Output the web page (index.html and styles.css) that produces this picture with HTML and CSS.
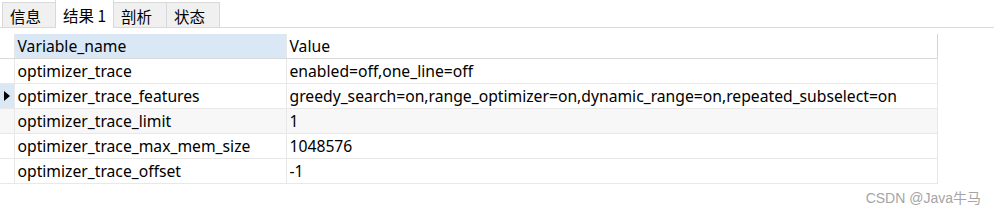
FILE: index.html
```html
<!DOCTYPE html>
<html lang="zh-CN">
<head>
  <meta charset="UTF-8" />
  <title>结果 1</title>
  <link rel="stylesheet" href="styles.css">
</head>
<body>
  <!-- 结果页签 -->
  <div class="tabbar">
    <div class="tab">信息</div>
    <div class="tab active">结果 1</div>
    <div class="tab">剖析</div>
    <div class="tab">状态</div>
  </div>

  <!-- 结果网格 -->
  <table class="grid">
    <colgroup>
      <col class="col-mark">
      <col class="col-name">
      <col class="col-value">
    </colgroup>
    <thead>
      <tr>
        <th class="mark"></th>
        <th class="sorted">Variable_name</th>
        <th>Value</th>
      </tr>
    </thead>
    <tbody>
      <tr>
        <td class="mark"></td>
        <td>optimizer_trace</td>
        <td>enabled=off,one_line=off</td>
      </tr>
      <tr class="current">
        <td class="mark"><span class="arrow"></span></td>
        <td>optimizer_trace_features</td>
        <td>greedy_search=on,range_optimizer=on,dynamic_range=on,repeated_subselect=on</td>
      </tr>
      <tr class="alt">
        <td class="mark"></td>
        <td>optimizer_trace_limit</td>
        <td>1</td>
      </tr>
      <tr>
        <td class="mark"></td>
        <td>optimizer_trace_max_mem_size</td>
        <td>1048576</td>
      </tr>
      <tr>
        <td class="mark"></td>
        <td>optimizer_trace_offset</td>
        <td>-1</td>
      </tr>
    </tbody>
  </table>

  <div class="watermark">CSDN @Java牛马</div>
</body>
</html>
```

FILE: styles.css
```css
/* 页面 */
body {
  margin: 0;
  width: 994px;
  height: 213px;
  background: #fff;
  font-family: "Noto Sans", "Noto Sans CJK SC", sans-serif;
  color: #000;
  position: relative;
  overflow: hidden;
}

/* 页签 */
.tabbar {
  display: flex;
  align-items: flex-end;
  height: 27px;
  padding-left: 2px;
  border-bottom: 1px solid #dadada;
}
.tab {
  height: 24px;
  line-height: 26px;
  padding: 0 0 0 7px;
  background: #f0f0f0;
  border: 1px solid #d9d9d9;
  border-bottom: none;
  font-size: 15.5px;
  font-family: "Noto Sans CJK SC", sans-serif;
  width: 45px;
  margin-right: -1px;
}
.tab.active {
  line-height: 30px;
  background: #fff;
  width: 50px;
  position: relative;
  margin-bottom: -1px;
  height: 28px;
}

/* 网格 */
.grid {
  margin-top: 6px;
  border-collapse: collapse;
  table-layout: fixed;
  width: 937px;
  font-size: 15.7px;
}
.col-mark { width: 14px; }
.col-name { width: 272px; }
.col-value { width: 651px; }

.grid th,
.grid td {
  height: 24px;
  padding: 0 3px;
  text-align: left;
  font-weight: normal;
  white-space: nowrap;
  border-right: 1px solid #e8e8e8;
  border-bottom: 1px solid #e8e8e8;
}
.grid th {
  border-bottom-color: #d9d9d9;
}
.grid th:last-child {
  border-right: 1px solid #d4d4d4;
}
.grid th.sorted {
  background: #dae8f6;
}
.grid .mark {
  padding: 0;
  position: relative;
}
.grid tr.alt td {
  background: #f7f7f7;
}
.grid tr.current .mark {
  background: #dae8f6;
}
.arrow {
  display: block;
  width: 0;
  height: 0;
  margin-left: 4px;
  border-top: 5px solid transparent;
  border-bottom: 5px solid transparent;
  border-left: 6px solid #000;
}

/* 水印 */
.watermark {
  position: absolute;
  right: 13px;
  bottom: 6px;
  font-size: 14px;
  color: #a5a5a5;
  font-family: "Liberation Sans", "Noto Sans CJK SC", sans-serif;
}
```
